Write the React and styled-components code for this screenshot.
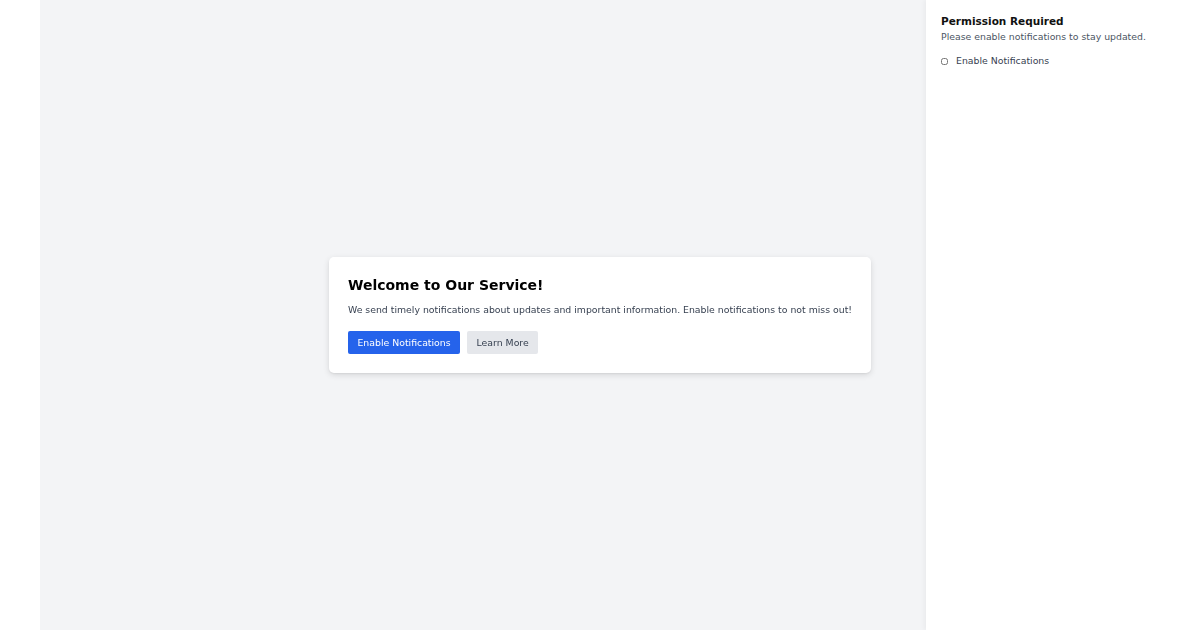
import React from 'react'
import styled, { createGlobalStyle } from 'styled-components'

const GlobalStyle = createGlobalStyle`
  html, body {
    margin: 0;
    padding: 0;
    height: 100%;
    background: #ffffff;
    font-family: "DejaVu Sans", "Liberation Sans", sans-serif;
  }
  #root { height: 100%; }
`

function App() {
  return (
    <>
      <GlobalStyle />
      <Page>
        <Main />
        <Sidebar>
          <SideTitle>Permission Required</SideTitle>
          <SideText>Please enable notifications to stay updated.</SideText>
          <CheckRow>
            <input type="checkbox" />
            <span>Enable Notifications</span>
          </CheckRow>
        </Sidebar>
      </Page>
      {/* Welcome dialog */}
      <Overlay>
        <Card>
          <CardTitle>Welcome to Our Service!</CardTitle>
          <CardText>
            We send timely notifications about updates and important information. Enable notifications to not miss out!
          </CardText>
          <Actions>
            <Button primary>Enable Notifications</Button>
            <Button>Learn More</Button>
          </Actions>
        </Card>
      </Overlay>
    </>
  )
}

export default App

const Page = styled.div`
  display: flex;
  height: 630px;
  padding-left: 40px;
`

const Main = styled.div`
  flex: 1;
  background: #f3f4f6;
`

const Sidebar = styled.aside`
  width: 274px;
  box-sizing: border-box;
  padding: 14px 15px;
  background: #ffffff;
  box-shadow: -2px 0 4px rgba(0, 0, 0, 0.04);
`

const SideTitle = styled.h3`
  margin: 0;
  font-size: 10.5px;
  font-weight: bold;
  color: #111;
  line-height: 15px;
`

const SideText = styled.p`
  margin: 2px 0 12px;
  font-size: 9.33px;
  color: #4b5563;
  line-height: 12px;
`

const CheckRow = styled.label`
  display: flex;
  align-items: center;
  gap: 8px;
  font-size: 9.33px;
  line-height: 12px;
  color: #374151;

  input {
    margin: 0;
    width: 7px;
    height: 7px;
  }
`

const Overlay = styled.div`
  position: fixed;
  inset: 0;
  display: flex;
  align-items: center;
  justify-content: center;
  pointer-events: none;
`

const Card = styled.div`
  pointer-events: auto;
  background: #ffffff;
  border-radius: 5px;
  padding: 19px;
  box-shadow: 0 2px 6px rgba(0, 0, 0, 0.12), 0 1px 2px rgba(0, 0, 0, 0.06);
`

const CardTitle = styled.h2`
  margin: 0 0 9px;
  font-size: 14px;
  font-weight: bold;
  color: #000;
  line-height: 18px;
`

const CardText = styled.p`
  margin: 0 0 14px;
  font-size: 9.33px;
  color: #374151;
  line-height: 14px;
`

const Actions = styled.div`
  display: flex;
  gap: 7px;
`

const Button = styled.button`
  border: none;
  border-radius: 2px;
  padding: 0 9.5px;
  height: 23px;
  font-family: inherit;
  font-size: 9.33px;
  background: ${p => (p.primary ? '#2563eb' : '#e5e7eb')};
  color: ${p => (p.primary ? '#ffffff' : '#374151')};
  cursor: pointer;
`
